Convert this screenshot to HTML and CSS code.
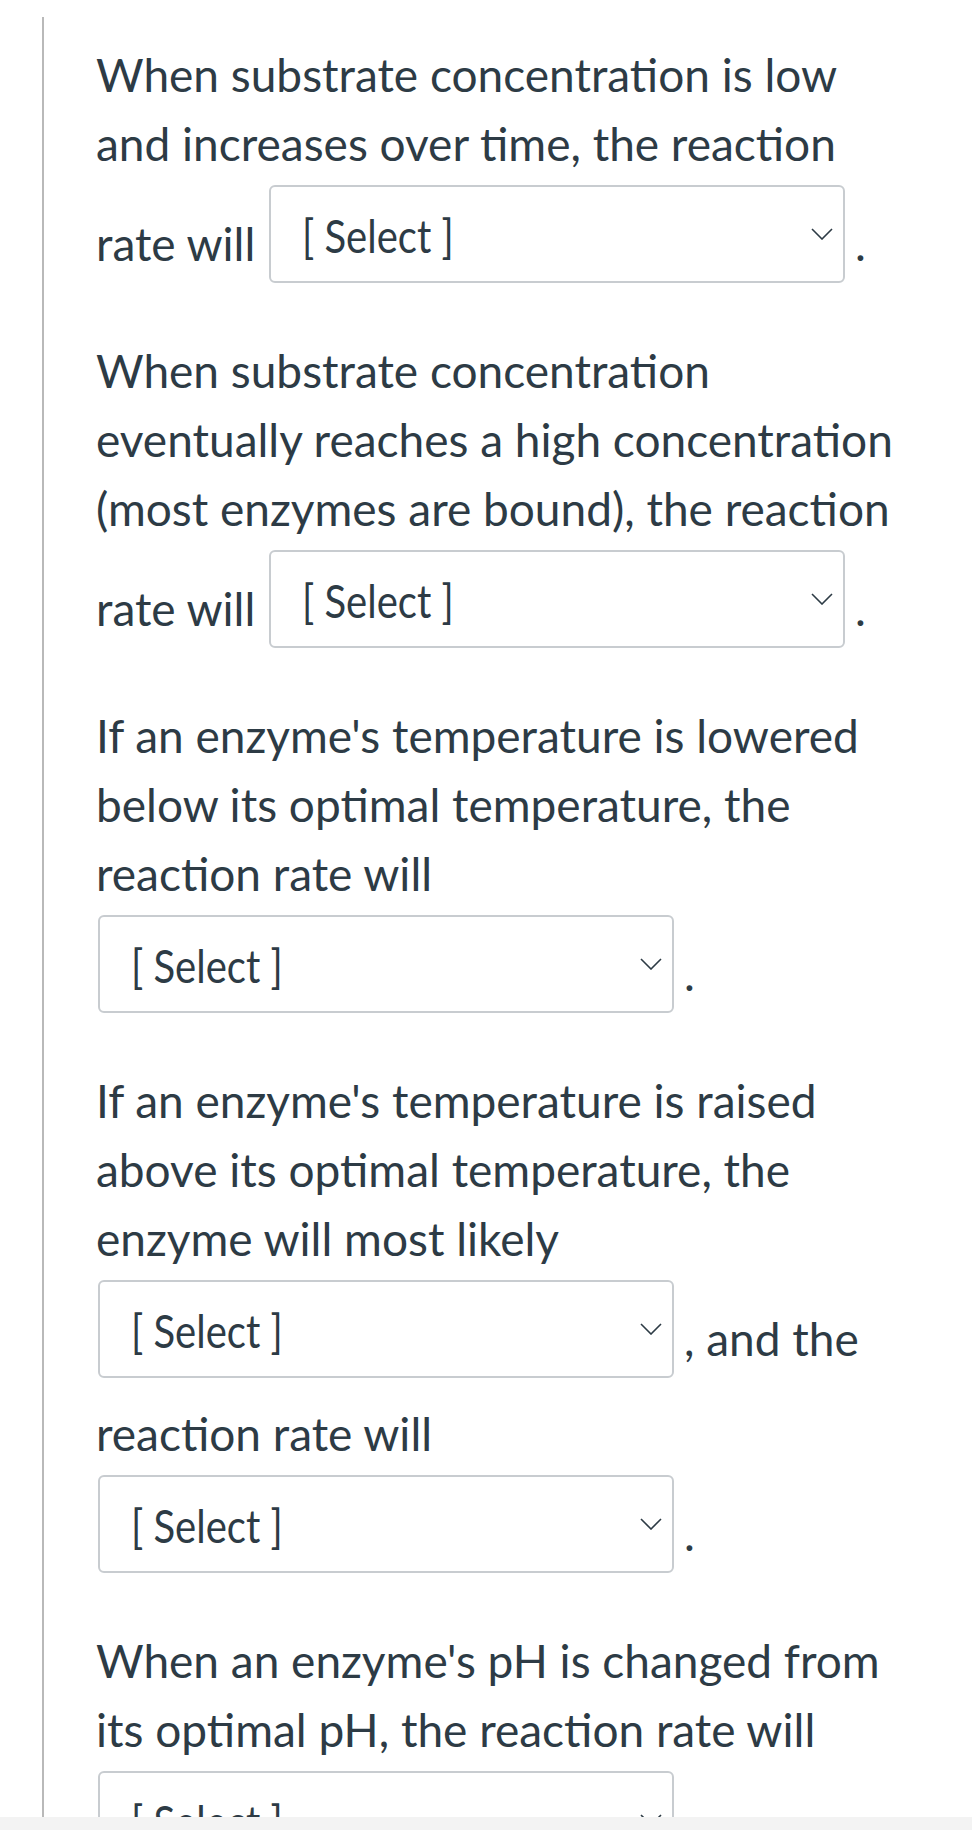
FILE: index.html
```html
<!DOCTYPE html>
<html lang="en">
<head>
  <meta charset="UTF-8">
  <meta name="viewport" content="width=device-width, initial-scale=1.0">
  <title>Enzyme Activity</title>
  <link rel="stylesheet" href="styles.css">
</head>
<body>
  <div class="screen">
    <div class="question">
      <p>When substrate concentration is low and increases over time, the reaction rate will <span class="dropdown"><span class="dropdown-label">[ Select ]</span><svg class="chevron" viewBox="0 0 22 12"><path d="M1 1 L11 11 L21 1"/></svg></span>.</p>

      <p>When substrate concentration eventually reaches a high concentration (most enzymes are bound), the reaction rate will <span class="dropdown"><span class="dropdown-label">[ Select ]</span><svg class="chevron" viewBox="0 0 22 12"><path d="M1 1 L11 11 L21 1"/></svg></span>.</p>

      <p>If an enzyme's temperature is lowered below its optimal temperature, the reaction rate will <span class="dropdown"><span class="dropdown-label">[ Select ]</span><svg class="chevron" viewBox="0 0 22 12"><path d="M1 1 L11 11 L21 1"/></svg></span>.</p>

      <p>If an enzyme's temperature is raised above its optimal temperature, the enzyme will most likely <span class="dropdown"><span class="dropdown-label">[ Select ]</span><svg class="chevron" viewBox="0 0 22 12"><path d="M1 1 L11 11 L21 1"/></svg></span>, and the reaction rate will <span class="dropdown"><span class="dropdown-label">[ Select ]</span><svg class="chevron" viewBox="0 0 22 12"><path d="M1 1 L11 11 L21 1"/></svg></span>.</p>

      <p>When an enzyme's pH is changed from its optimal pH, the reaction rate will <span class="dropdown"><span class="dropdown-label">[ Select ]</span><svg class="chevron" viewBox="0 0 22 12"><path d="M1 1 L11 11 L21 1"/></svg></span>.</p>
    </div>
  </div>
  <div class="bottom-bar"></div>
</body>
</html>
```

FILE: styles.css
```css
html, body {
  margin: 0;
  padding: 0;
}

body {
  font-family: Lato, 'Noto Sans', Arial, sans-serif;
  color: #2d3b45;
  background: #ffffff;
  height: 1830px;
  display: flex;
  flex-direction: column;
  overflow: hidden;
}

.screen {
  flex: 1;
  overflow: hidden;
  padding: 17px 0 0 42px;
}

.question {
  border-left: 2px solid #b9b9b9;
  padding: 23px 0 0 52px;
  width: 809px;
  min-height: 100%;
}

.question p {
  font-size: 46px;
  line-height: 69px;
  margin: 0 0 32px 0;
}

.dropdown {
  display: inline-flex;
  align-items: center;
  justify-content: space-between;
  box-sizing: border-box;
  width: 576px;
  height: 98px;
  padding: 0 10px 0 31px;
  margin: 7px 10px 21px 2px;
  border: 2px solid #c8ccd0;
  border-radius: 6px;
  background: #ffffff;
  vertical-align: 8px;
  line-height: 1;
}

.dropdown-label {
  font-size: 46px;
  padding-top: 4px;
  color: #2d3b45;
  white-space: nowrap;
  transform: scaleX(0.87);
  transform-origin: left center;
}

.chevron {
  width: 22px;
  height: 12px;
  fill: none;
  stroke: #2d3b45;
  stroke-width: 1.6;
}

.bottom-bar {
  height: 13px;
  background: #f3f3f3;
}
```
